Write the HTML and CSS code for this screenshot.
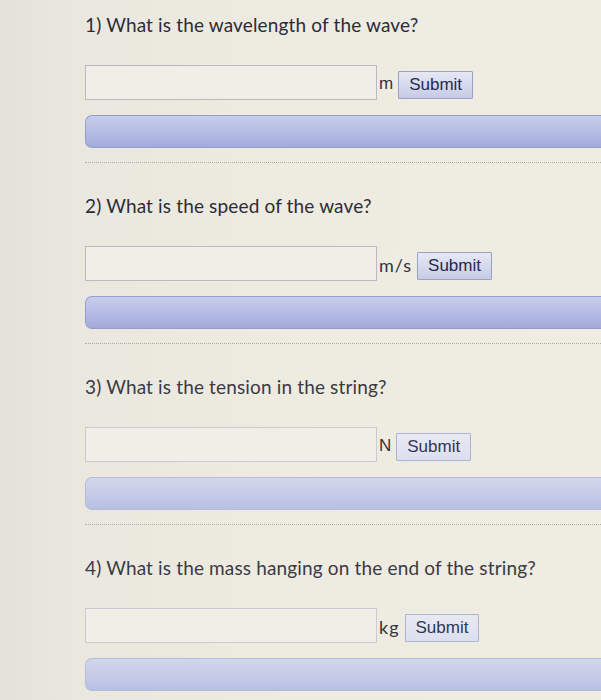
FILE: index.html
```html
<!DOCTYPE html>
<html>
<head>
<meta charset="utf-8">
<link rel="stylesheet" href="styles.css">
</head>
<body>
<div class="page">
  <section class="q">
    <h2 class="q-title">1) What is the wavelength of the wave?</h2>
    <div class="answer-row">
      <input class="answer" type="text">
      <span class="unit">m</span>
      <button class="submit">Submit</button>
    </div>
    <div class="feedback"></div>
    <div class="divider"></div>
  </section>
  <section class="q">
    <h2 class="q-title">2) What is the speed of the wave?</h2>
    <div class="answer-row">
      <input class="answer" type="text">
      <span class="unit unit-alt">m/s</span>
      <button class="submit">Submit</button>
    </div>
    <div class="feedback"></div>
    <div class="divider"></div>
  </section>
  <section class="q q-faded">
    <h2 class="q-title">3) What is the tension in the string?</h2>
    <div class="answer-row">
      <input class="answer" type="text">
      <span class="unit">N</span>
      <button class="submit">Submit</button>
    </div>
    <div class="feedback"></div>
    <div class="divider"></div>
  </section>
  <section class="q q-faded q-last">
    <h2 class="q-title">4) What is the mass hanging on the end of the string?</h2>
    <div class="answer-row">
      <input class="answer" type="text">
      <span class="unit unit-alt">kg</span>
      <button class="submit">Submit</button>
    </div>
    <div class="feedback"></div>
  </section>
</div>
</body>
</html>
```
FILE: styles.css
```css
html, body {
  margin: 0;
  padding: 0;
}
body {
  width: 601px;
  height: 700px;
  overflow: hidden;
  background: linear-gradient(90deg, #e3e1d8 0%, #eae8de 12%, #eeebe1 50%, #efece2 100%);
  font-family: Lato, "Open Sans", sans-serif;
}
.page {
  box-sizing: border-box;
  width: 601px;
  padding: 14px 0 0 85px;
  overflow: hidden;
}
.q {
  display: flex;
  flex-direction: column;
  height: 181px;
}
.q-last {
  height: auto;
}
.q-title {
  margin: 0;
  font-size: 19px;
  line-height: 22px;
  font-weight: normal;
  color: #2c2c38;
  letter-spacing: 0.15px;
}
.answer-row {
  margin-top: 29px;
  display: flex;
  align-items: center;
  height: 35px;
}
.answer {
  box-sizing: border-box;
  width: 292px;
  height: 35px;
  margin: 0;
  border: 1px solid #b9b9c0;
  background: #f0eee7;
  outline: none;
}
.unit {
  margin: 3px 5px 0 2px;
  font-family: "Liberation Sans", Arial, sans-serif;
  font-size: 17px;
  color: #33333d;
}
.unit-alt {
  font-family: Lato, "Open Sans", sans-serif;
  font-size: 18px;
  letter-spacing: 1px;
}
.submit {
  box-sizing: border-box;
  height: 28px;
  margin-top: 4px;
  padding: 0 10px;
  border: 1px solid #9aa0c7;
  border-radius: 1px;
  background: linear-gradient(180deg, #e6e8f4 0%, #d3d7ec 60%, #c6cbe6 100%);
  font-family: "Liberation Sans", Arial, sans-serif;
  font-size: 17px;
  color: #262a50;
}
.feedback {
  margin-top: 15px;
  height: 33px;
  box-sizing: border-box;
  border: 1px solid #959dcd;
  border-right: none;
  border-radius: 7px 0 0 7px;
  background: linear-gradient(180deg, #c8cdea 0%, #b6bde4 50%, #a2aadb 100%);
}
.divider {
  margin-top: 14px;
  border-top: 1px dotted #aeaca3;
}
.q-faded .q-title {
  color: #3a3a46;
}
.q-faded .answer {
  border-color: #cacad0;
}
.q-faded .submit {
  border-color: #aeb3d2;
  background: linear-gradient(180deg, #e8e9f2 0%, #dcdfee 100%);
  color: #33365a;
}
.q-faded .feedback {
  border-color: #b5bbdc;
  background: linear-gradient(180deg, #d3d7ec 0%, #c6cce8 50%, #b8bfe2 100%);
}
```
